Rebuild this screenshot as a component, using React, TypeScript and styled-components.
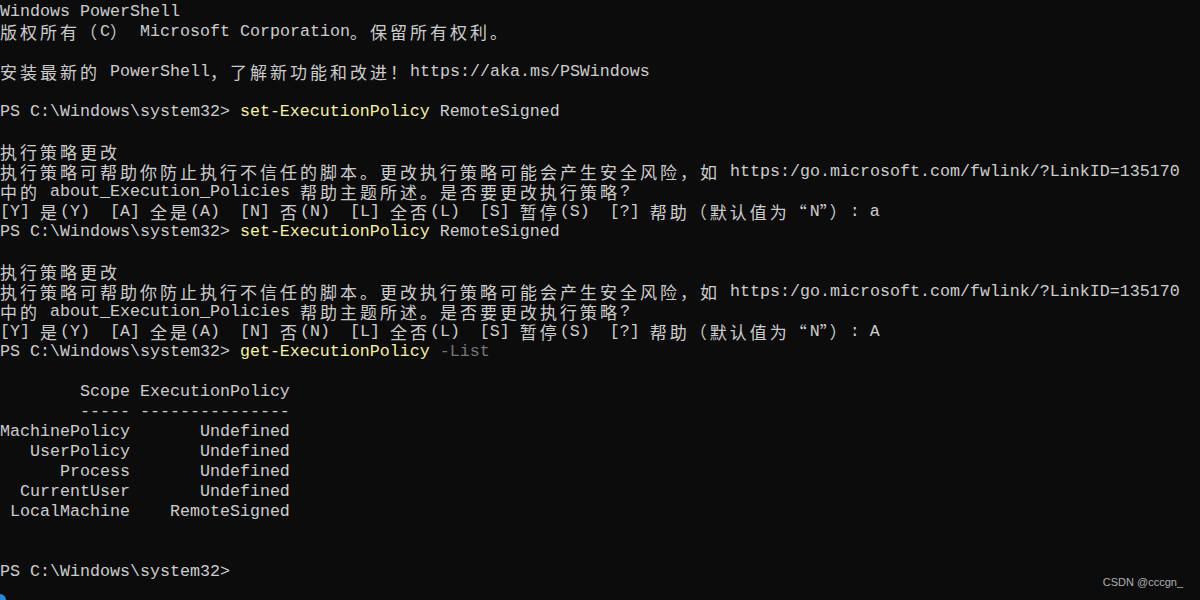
import React from "react";
import styled, { createGlobalStyle } from "styled-components";

const GlobalStyle = createGlobalStyle`
  html, body {
    margin: 0;
    padding: 0;
    background: #0c0c0c;
  }
`;

const Terminal = styled.div`
  position: relative;
  box-sizing: border-box;
  width: 1200px;
  height: 600px;
  padding-top: 2px;
  overflow: hidden;
  background: #0c0c0c;
  color: #cccccc;
  font-family: "Liberation Mono", "DejaVu Sans Mono", monospace;
  font-size: 16.6667px;
  line-height: 20px;
`;

const Line = styled.div`
  height: 20px;
  white-space: pre;
`;

const Wide = styled.span<{ $cells: number }>`
  display: inline-block;
  width: ${(p) => p.$cells * 10}px;
  height: 20px;
  vertical-align: top;
  overflow: visible;
  white-space: nowrap;
  font-family: "Noto Sans CJK SC", sans-serif;
  font-size: 17px;
  line-height: 20px;
`;

type Tone = "plain" | "command" | "param";

const Token = styled.span<{ $tone: Tone }>`
  color: ${(p) =>
    p.$tone === "command" ? "#f9f1a5" : p.$tone === "param" ? "#767676" : "#cccccc"};
`;

const Watermark = styled.div`
  position: absolute;
  right: 17px;
  bottom: 11px;
  font-family: "Liberation Sans", Arial, sans-serif;
  font-size: 11px;
  line-height: 13px;
  color: #b0b0b0;
`;

const CornerBlob = styled.div`
  position: absolute;
  left: -6px;
  bottom: -6px;
  width: 12px;
  height: 12px;
  border-radius: 50%;
  background: #2b87d8;
`;

const cellsOf = (ch: string) => {
  const c = ch.codePointAt(0) || 0;
  if (
    (c >= 0x2e80 && c <= 0x9fff) ||
    (c >= 0xff00 && c <= 0xff60) ||
    (c >= 0xffe0 && c <= 0xffe6) ||
    c === 0x201c
  )
    return 2;
  if (c === 0x201d) return 1;
  return 0;
};

const renderText = (text: string, keyBase: string) => {
  const out: React.ReactNode[] = [];
  let buf = "";
  let i = 0;
  for (const ch of Array.from(text)) {
    const cells = cellsOf(ch);
    if (cells) {
      if (buf) {
        out.push(<React.Fragment key={`${keyBase}-n${i}`}>{buf}</React.Fragment>);
        buf = "";
      }
      out.push(
        <Wide key={`${keyBase}-w${i}`} $cells={cells}>
          {ch}
        </Wide>
      );
    } else {
      buf += ch;
    }
    i++;
  }
  if (buf) out.push(<React.Fragment key={`${keyBase}-n${i}`}>{buf}</React.Fragment>);
  return out;
};

type Seg = [string, Tone?];

const PROMPT = "PS C:\\Windows\\system32> ";

const policyLines: Seg[][] = [
  [["执行策略更改"]],
  [["执行策略可帮助你防止执行不信任的脚本。更改执行策略可能会产生安全风险，如 https:/go.microsoft.com/fwlink/?LinkID=135170"]],
  [["中的 about_Execution_Policies 帮助主题所述。是否要更改执行策略?"]],
];

const choice = (answer: string): Seg[] => [
  ["[Y] 是(Y)  [A] 全是(A)  [N] 否(N)  [L] 全否(L)  [S] 暂停(S)  [?] 帮助（默认值为“N”）: " + answer],
];

const lines: Seg[][] = [
  [["Windows PowerShell"]],
  [["版权所有（C） Microsoft Corporation。保留所有权利。"]],
  [],
  [["安装最新的 PowerShell，了解新功能和改进！https://aka.ms/PSWindows"]],
  [],
  [[PROMPT], ["set-ExecutionPolicy", "command"], [" RemoteSigned"]],
  [],
  ...policyLines,
  choice("a"),
  [[PROMPT], ["set-ExecutionPolicy", "command"], [" RemoteSigned"]],
  [],
  ...policyLines,
  choice("A"),
  [[PROMPT], ["get-ExecutionPolicy", "command"], [" "], ["-List", "param"]],
  [],
  [["        Scope ExecutionPolicy"]],
  [["        ----- ---------------"]],
  [["MachinePolicy       Undefined"]],
  [["   UserPolicy       Undefined"]],
  [["      Process       Undefined"]],
  [["  CurrentUser       Undefined"]],
  [[" LocalMachine    RemoteSigned"]],
  [],
  [],
  [["PS C:\\Windows\\system32>"]],
];

export default function App() {
  return (
    <>
      <GlobalStyle />
      <Terminal>
        {lines.map((segs, li) => (
          <Line key={li}>
            {segs.map(([text, tone], si) => (
              <Token key={si} $tone={tone || "plain"}>
                {renderText(text, `${li}-${si}`)}
              </Token>
            ))}
          </Line>
        ))}
        <Watermark>CSDN @cccgn_</Watermark>
        <CornerBlob />
      </Terminal>
    </>
  );
}
